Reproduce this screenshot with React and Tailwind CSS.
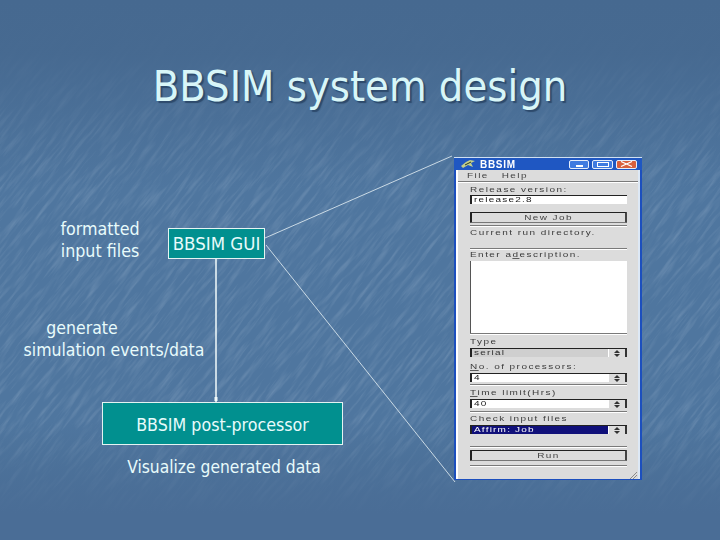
const font = "[font-family:'DejaVu_Sans_Condensed','DejaVu_Sans',sans-serif]";

function Label({ children, className = "" }) {
  return <div className={`h-[7px] flex items-center text-[10px] leading-[7px] tracking-[1.45px] text-[#3c3c3c] whitespace-nowrap scale-y-[0.8] origin-left ${className}`}>{children}</div>;
}

function Rule({ className = "" }) {
  return <div className={`h-px bg-[#7a7a7a] border-b border-white box-content ${className}`} />;
}

function Field({ value, spin, selected, gray }) {
  return (
    <div className="h-[9px] flex border-l-2 border-t border-[#222] bg-white items-stretch">
      <div className={`flex-1 flex items-center pl-[2px] text-[10px] leading-none tracking-[1.2px] overflow-hidden ${selected ? "bg-[#10107a] text-white" : gray ? "bg-[#cfcfcf] text-[#333]" : "text-[#222]"}`}>
        <span className="scale-y-[0.7] inline-block">{value}</span>
      </div>
      {spin && (
        <div className="w-[18px] bg-[#dcdcdc] border-r-2 border-[#333] flex flex-col items-center justify-center gap-px ml-px">
          <span className="w-0 h-0 border-x-[3px] border-x-transparent border-b-[3px] border-b-[#333]" />
          <span className="w-0 h-0 border-x-[3px] border-x-transparent border-t-[3px] border-t-[#333]" />
        </div>
      )}
    </div>
  );
}

function Btn({ children }) {
  return (
    <div className="h-[11px] flex items-center justify-center bg-[#dcdcdc] border-t border-b border-l-2 border-r-2 border-l-[#222] border-r-[#444] border-t-[#222] border-b-[#777] rounded-[1px] text-[10px] leading-none tracking-[1.4px] text-[#444]">
      <span className="scale-y-[0.8] inline-block">{children}</span>
    </div>
  );
}

function BBSimWindow() {
  return (
    <div className="absolute left-[454px] top-[157px] w-[188px] h-[323px] bg-[#1c4fbe] flex flex-col overflow-hidden border-t border-[#cfe0f2] blur-[0.25px] [font-family:'Liberation_Sans',sans-serif]">
      <div className="h-[12px] flex items-center pl-[7px] pr-[3px] bg-[#1f57c2] shrink-0">
        <svg width="15" height="8" viewBox="0 0 15 8" className="mr-[4px]">
          <path d="M0 6 L5 2 L9 0 L14 1 L10 3 L12 7 L7 5 L2 8 Z" fill="#c4d08a" />
          <path d="M4 5 L10 2" stroke="#2a3a20" strokeWidth="1" />
        </svg>
        <span className="text-[10px] font-bold tracking-[0.7px] text-white">BBSIM</span>
        <div className="ml-auto flex gap-[3px] mr-[2px]">
          <span className="w-[20px] h-[9px] rounded-[2px] bg-[#3f7be0] border border-[#e6eefa] flex items-end justify-center pb-px"><span className="w-[7px] h-[2px] bg-white" /></span>
          <span className="w-[21px] h-[9px] rounded-[2px] bg-[#3f7be0] border border-[#e6eefa] flex items-center justify-center"><span className="w-[12px] h-[5px] border border-white" /></span>
          <span className="w-[21px] h-[9px] rounded-[2px] bg-[#d9603c] border border-[#e6eefa] flex items-center justify-center">
            <svg width="13" height="6" viewBox="0 0 13 6"><path d="M1 0.5 L12 5.5 M12 0.5 L1 5.5" stroke="#fff" strokeWidth="1.2" /></svg>
          </span>
        </div>
      </div>
      <div className="relative flex-1 ml-[2px] mr-[2px] mb-px bg-[#dcdcdc] border-l-2 border-l-white border-r-2 border-r-[#dde8f5] flex flex-col min-h-0">
        <div className="h-[11px] flex items-center gap-[13px] pl-[9px] text-[10px] leading-none tracking-[1.4px] text-[#444] shrink-0">
          <span className="scale-y-[0.8] inline-block">File</span><span className="scale-y-[0.8] inline-block">Help</span>
        </div>
        <Rule className="shrink-0" />
        <div className="flex-1 pl-[12px] pr-[11px] pt-[3px] flex flex-col">
          <Label>Release version:</Label>
          <div className="mt-[2px]"><Field value="release2.8" /></div>
          <div className="mt-[8px]"><Btn>New Job</Btn></div>
          <Rule className="mt-[2px]" />
          <Label className="mt-[2px]">Current run directory.</Label>
          <Rule className="mt-[12px]" />
          <Label className="mt-[1px]">Enter a <u>d</u>escription.</Label>
          <div className="mt-[3px] h-[72px] bg-white border-l border-[#555] shrink-0" />
          <Rule />
          <Label className="mt-[3px]">Type</Label>
          <div className="mt-[3px]"><Field value="serial" spin gray /></div>
          <Label className="mt-[6px]"><u>N</u>o. of processors:</Label>
          <div className="mt-[3px]"><Field value="4" spin /></div>
          <Rule className="mt-[2px]" />
          <Label className="mt-[3px]"><u>T</u>ime limit(Hrs)</Label>
          <div className="mt-[3px]"><Field value="40" spin /></div>
          <Rule className="mt-[3px]" />
          <Label className="mt-[2px]">Check input files</Label>
          <div className="mt-[3px]"><Field value="Affirm: Job" spin selected /></div>
          <Rule className="mt-[12px]" />
          <div className="mt-[2px]"><Btn>Run</Btn></div>
          <Rule className="mt-[4px]" />
        </div>
        <svg width="10" height="8" viewBox="0 0 10 8" className="absolute right-0 bottom-0">
          <path d="M9 1 L2 8 M9 4 L5 8" stroke="#8a8a8a" strokeWidth="1" />
        </svg>
      </div>
    </div>
  );
}

function Texture() {
  return (
    <svg className="absolute inset-0 w-full h-full" width="720" height="540">
      <defs>
        <filter id="tex" x="-30%" y="-30%" width="160%" height="160%">
          <feTurbulence type="fractalNoise" baseFrequency="0.03 0.28" numOctaves="3" seed="7" />
          <feColorMatrix type="matrix" values="0 0 0 0 0.80  0 0 0 0 0.87  0 0 0 0 0.95  1.8 0 0 0 -0.8" />
        </filter>
        <linearGradient id="shade" x1="0" y1="0" x2="0" y2="1">
          <stop offset="0" stopColor="#466990" stopOpacity="1" />
          <stop offset="0.1" stopColor="#466990" stopOpacity="0.95" />
          <stop offset="0.35" stopColor="#466990" stopOpacity="0" />
          <stop offset="0.78" stopColor="#466990" stopOpacity="0" />
          <stop offset="0.95" stopColor="#4a6d96" stopOpacity="1" />
          <stop offset="1" stopColor="#4a6d96" stopOpacity="1" />
        </linearGradient>
      </defs>
      <g transform="rotate(-52 360 270)">
        <rect x="-300" y="-300" width="1320" height="1140" filter="url(#tex)" opacity="0.2" />
      </g>
      <rect width="720" height="540" fill="url(#shade)" />
    </svg>
  );
}

function Connectors() {
  return (
    <svg className="absolute inset-0" width="720" height="540">
      <line x1="265" y1="238" x2="452" y2="156" stroke="#e8f2f6" strokeWidth="0.8" />
      <line x1="266" y1="245" x2="455" y2="482" stroke="#e8f2f6" strokeWidth="0.8" />
      <line x1="216" y1="259" x2="216" y2="402" stroke="#f2fbfb" strokeWidth="1.5" />
      <rect x="214.5" y="397" width="3" height="4" fill="#f2fbfb" />
    </svg>
  );
}

export default function App() {
  return (
    <div className={`relative w-[720px] h-[540px] overflow-hidden bg-[#4f769f] ${font} text-[#e8fbfb]`}>
      <Texture />
      <Connectors />
      <h1 className="absolute left-0 top-[59px] w-[720px] text-center text-[43px] leading-[54px] font-normal text-[#d8f6f8] [text-shadow:2px_2px_1px_#2d4a6c]">
        BBSIM system design
      </h1>
      <div className="absolute left-[40px] top-[218px] w-[120px] text-center text-[17.7px] leading-[22px]">formatted<br />input files</div>
      <div className="absolute left-[168px] top-[228px] w-[97px] h-[31px] border border-[#e4f4f2] bg-[#01908f] flex items-center justify-center text-[18.5px] whitespace-nowrap">BBSIM GUI</div>
      <div className="absolute left-[14px] top-[317px] w-[200px] text-[17.5px] leading-[22px] text-center">
        <div className="pr-[64px]">generate</div>
        <div className="whitespace-nowrap">simulation events/data</div>
      </div>
      <div className="absolute left-[102px] top-[402px] w-[241px] h-[43px] pt-[3px] border border-[#e4f4f2] bg-[#01908f] flex items-center justify-center text-[17.7px] whitespace-nowrap">BBSIM post-processor</div>
      <div className="absolute left-[124px] top-[456px] w-[200px] text-center text-[17.3px] leading-[22px] whitespace-nowrap">Visualize generated data</div>
      <BBSimWindow />
    </div>
  );
}
